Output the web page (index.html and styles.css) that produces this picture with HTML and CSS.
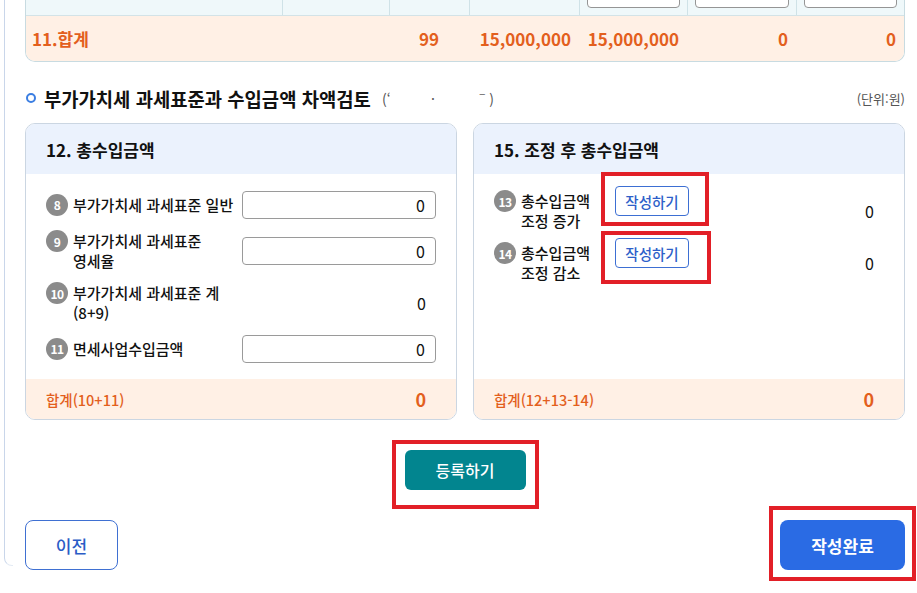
FILE: index.html
```html
<!DOCTYPE html>
<html lang="ko">
<head>
<meta charset="utf-8">
<title>부가가치세 과세표준과 수입금액 차액검토</title>
<link rel="stylesheet" href="styles.css">
</head>
<body>
<div class="page">
  <div class="sum-table">
    <div class="trow trow-top">
      <div class="tcell"></div>
      <div class="tcell"></div>
      <div class="tcell"></div>
      <div class="tcell"></div>
      <div class="tcell"><input class="tinp" type="text" readonly></div>
      <div class="tcell"><input class="tinp" type="text" readonly></div>
      <div class="tcell"><input class="tinp" type="text" readonly></div>
    </div>
    <div class="trow trow-total">
      <div class="tcell t-label">11.합계</div>
      <div class="tcell"></div>
      <div class="tcell t-center">99</div>
      <div class="tcell t-num">15,000,000</div>
      <div class="tcell t-num">15,000,000</div>
      <div class="tcell t-num">0</div>
      <div class="tcell t-num">0</div>
    </div>
  </div>

  <div class="sec-head">
    <h2 class="sec-title"><span class="bullet"></span>부가가치세 과세표준과 수입금액 차액검토 <span class="redact"><span>(‘</span><span>·</span><span>ˉ)</span></span></h2>
    <span class="unit">(단위:원)</span>
  </div>

  <div class="cards">
    <section class="card">
      <div class="card-head">12. 총수입금액</div>
      <div class="card-body">
        <div class="frow">
          <div class="fhead"><span class="badge">8</span><span class="flabel">부가가치세 과세표준 일반</span></div>
          <div class="fctl"><input class="finp" type="text" value="0" readonly></div>
        </div>
        <div class="frow">
          <div class="fhead"><span class="badge">9</span><span class="flabel">부가가치세 과세표준 영세율</span></div>
          <div class="fctl"><input class="finp" type="text" value="0" readonly></div>
        </div>
        <div class="frow">
          <div class="fhead"><span class="badge">10</span><span class="flabel">부가가치세 과세표준 계 (8+9)</span></div>
          <div class="fctl fval">0</div>
        </div>
        <div class="frow">
          <div class="fhead"><span class="badge">11</span><span class="flabel">면세사업수입금액</span></div>
          <div class="fctl"><input class="finp" type="text" value="0" readonly></div>
        </div>
      </div>
      <div class="card-foot"><span class="foot-label">합계(10+11)</span><span class="foot-val">0</span></div>
    </section>

    <section class="card">
      <div class="card-head">15. 조정 후 총수입금액</div>
      <div class="card-body">
        <div class="frow adj">
          <div class="fhead adj-head"><span class="badge">13</span><span class="flabel">총수입금액 조정 증가</span></div>
          <span class="hl adj-btn"><button class="btn-write" type="button">작성하기</button><span class="mark mark-w1"></span></span>
          <div class="adj-val">0</div>
        </div>
        <div class="frow adj">
          <div class="fhead adj-head"><span class="badge">14</span><span class="flabel">총수입금액 조정 감소</span></div>
          <span class="hl adj-btn"><button class="btn-write" type="button">작성하기</button><span class="mark mark-w2"></span></span>
          <div class="adj-val">0</div>
        </div>
      </div>
      <div class="card-foot"><span class="foot-label">합계(12+13-14)</span><span class="foot-val">0</span></div>
    </section>
  </div>

  <div class="center-act">
    <span class="hl"><button class="btn-teal" type="button">등록하기</button><span class="mark mark-reg"></span></span>
  </div>

  <div class="bottom-nav">
    <button class="btn-outline" type="button">이전</button>
    <span class="hl"><button class="btn-primary" type="button">작성완료</button><span class="mark mark-done"></span></span>
  </div>
</div>
</body>
</html>
```

FILE: styles.css
```css
* { box-sizing: border-box; }

html, body {
  margin: 0;
  padding: 0;
  background: #ffffff;
}

body {
  font-family: "Noto Sans CJK KR", "Noto Sans", sans-serif;
  color: #111;
  width: 917px;
  height: 593px;
  overflow: hidden;
  word-break: keep-all;
}

button, input {
  font-family: inherit;
}

.page {
  position: relative;
  display: flow-root;
  padding: 0 12px 0 25px;
}

.page::before {
  content: "";
  position: absolute;
  left: 4px;
  top: 0;
  width: 8px;
  height: 565px;
  border-left: 1px solid #c9d6ea;
  border-bottom: 1px solid #e3eaf4;
  border-bottom-left-radius: 8px;
}

/* ---------- summary table ---------- */
.sum-table {
  margin-top: -30px;
  border: 1px solid #c8dbe1;
  border-top: none;
  border-radius: 0 0 10px 10px;
  overflow: hidden;
}

.trow {
  display: grid;
  grid-template-columns: 256px 107px 80px 110px 108px 109px 1fr;
}

.trow-top {
  height: 46px;
  background: #eff8fa;
  border-bottom: 1px solid #d3e3e7;
}

.trow-top .tcell + .tcell {
  border-left: 1px solid #cfe2e7;
}

.trow-top .tcell {
  padding: 10px 7px 0;
}

.tinp {
  display: block;
  width: 100%;
  height: 28px;
  border: 1px solid #959595;
  border-radius: 4px;
  background: #fff;
}

.trow-total {
  height: 45px;
  background: #fff0e5;
  color: #e35f1d;
  font-size: 17px;
  font-weight: 700;
  align-items: center;
}

.t-label { padding-left: 6px; }
.t-center { text-align: center; }
.t-num { text-align: right; padding-right: 8px; }

/* ---------- section head ---------- */
.sec-head {
  display: flex;
  justify-content: space-between;
  align-items: center;
  height: 26px;
  margin: 23px 0 12px;
}

.sec-title {
  margin: 0;
  display: flex;
  align-items: center;
  font-size: 18.8px;
  font-weight: 700;
  color: #111;
  white-space: pre;
}

.bullet {
  width: 10px;
  height: 10px;
  border: 2.5px solid #3b7ee2;
  border-radius: 50%;
  margin: 0 8px 0 1px;
}

.redact {
  display: inline-flex;
  justify-content: space-between;
  width: 112px;
  margin-left: 6px;
  font-weight: 400;
  font-size: 14px;
  color: #555;
}

.unit {
  font-size: 13px;
  color: #555;
}

/* ---------- cards ---------- */
.cards {
  display: grid;
  grid-template-columns: 432px 432px;
  gap: 16px;
}

.card {
  display: flex;
  flex-direction: column;
  border: 1px solid #cbd6e2;
  border-radius: 10px;
  overflow: hidden;
  background: #fff;
}

.card-head {
  height: 50px;
  display: flex;
  align-items: center;
  padding: 0 20px;
  background: #ebf2fd;
  font-size: 17px;
  font-weight: 700;
  color: #111;
}

.card-body {
  flex: 1;
  display: flex;
  flex-direction: column;
  gap: 12px;
  padding: 17px 20px 16px;
}

.frow {
  display: flex;
  align-items: center;
  gap: 8px;
  min-height: 28px;
}

.fhead {
  flex: 1;
  display: flex;
  align-items: flex-start;
  gap: 5px;
  min-width: 0;
}

.badge {
  flex: none;
  width: 22px;
  height: 22px;
  margin-top: -1px;
  border-radius: 50%;
  background: #8b8b8b;
  color: #fff;
  font-size: 12px;
  font-weight: 700;
  letter-spacing: -0.6px;
  display: flex;
  align-items: center;
  justify-content: center;
}

.flabel {
  font-size: 15px;
  line-height: 20px;
  font-weight: 500;
  color: #111;
}

.fctl {
  flex: none;
  width: 194px;
}

.finp {
  display: block;
  width: 100%;
  height: 28px;
  border: 1px solid #9a9a9a;
  border-radius: 4px;
  padding: 0 10px;
  text-align: right;
  font-size: 16px;
  color: #111;
  background: #fff;
}

.fval {
  text-align: right;
  padding-right: 10px;
  font-size: 16px;
}

.adj {
  gap: 0;
}

.adj-head {
  flex: none;
  width: 115px;
}

.adj-head .flabel {
  width: 88px;
}

.adj-btn {
  align-self: flex-start;
  margin: -5px 0 0 6px;
}

.btn-write {
  display: block;
  width: 74px;
  height: 30px;
  padding: 0;
  border: 1px solid #3d6fd3;
  border-radius: 4px;
  background: #fff;
  color: #2e5fc9;
  font-size: 14.5px;
  font-weight: 500;
}

.adj-val {
  flex: 1;
  text-align: right;
  padding-right: 10px;
  font-size: 16px;
}

.card-foot {
  height: 40px;
  display: flex;
  align-items: center;
  justify-content: space-between;
  padding: 0 30px 0 20px;
  background: #fff0e5;
  color: #e35f1d;
}

.foot-label {
  font-size: 14.5px;
  font-weight: 500;
}

.foot-val {
  font-size: 18px;
  font-weight: 700;
}

/* ---------- actions ---------- */
.hl {
  position: relative;
  display: inline-block;
}

.mark {
  position: absolute;
  border: 4px solid #e21f27;
  pointer-events: none;
}

.mark-w1 { left: -14px; right: -20px; top: -14px; bottom: -10px; }
.mark-w2 { left: -14px; right: -22px; top: -7px; bottom: -16px; }
.mark-reg { left: -13px; right: -13px; top: -10px; bottom: -19px; }
.mark-done { left: -11px; right: -11px; top: -14px; bottom: -11px; }

.center-act {
  display: flex;
  justify-content: center;
  margin-top: 30px;
}

.btn-teal {
  display: block;
  width: 121px;
  height: 40px;
  border: none;
  border-radius: 6px;
  background: #02858f;
  color: #fff;
  font-size: 16px;
  font-weight: 500;
}

.bottom-nav {
  display: flex;
  justify-content: space-between;
  align-items: center;
  margin-top: 30px;
}

.btn-outline {
  width: 93px;
  height: 50px;
  border: 1px solid #3f70d2;
  border-radius: 8px;
  background: #fff;
  color: #2b5cc6;
  font-size: 17px;
  font-weight: 500;
}

.btn-primary {
  display: block;
  width: 125px;
  height: 50px;
  border: none;
  border-radius: 8px;
  background: #2a6be4;
  color: #fff;
  font-size: 17px;
  font-weight: 700;
}
```
